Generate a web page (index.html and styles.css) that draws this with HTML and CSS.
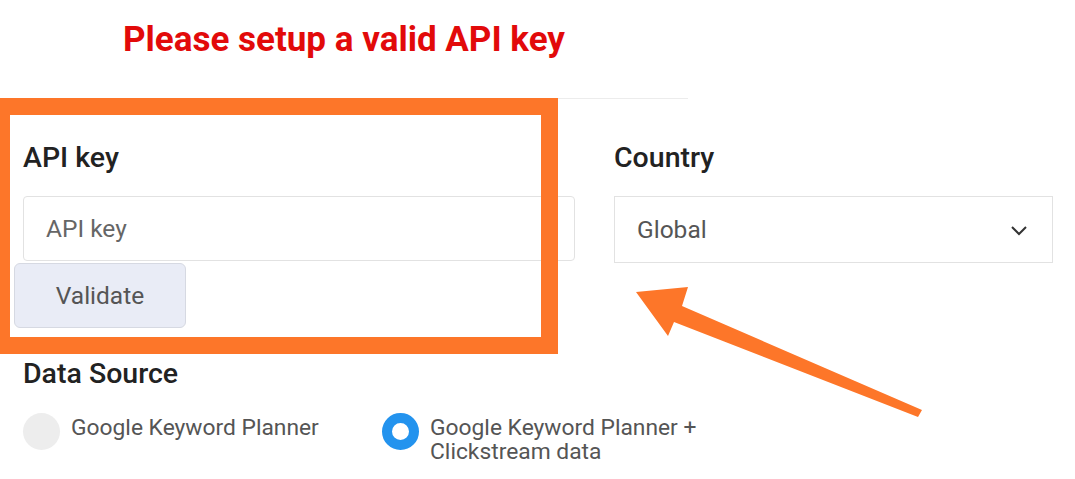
FILE: index.html
```html
<!DOCTYPE html>
<html lang="en">
<head>
  <meta charset="UTF-8" />
  <title>API key setup</title>
  <link rel="stylesheet" href="styles.css">
</head>
<body>
  <div class="page">
    <!-- Aviso -->
    <div class="top">
      <h1 class="warning">Please setup a valid API key</h1>
    </div>

    <!-- Campos -->
    <div class="fields">
      <div class="field field-key">
        <label class="label">API key</label>
        <input class="input" type="text" placeholder="API key" />
        <button class="btn-validate">Validate</button>
      </div>
      <div class="field field-country">
        <label class="label">Country</label>
        <div class="select">
          <span>Global</span>
          <svg class="chevron" width="18" height="12" viewBox="0 0 18 12">
            <polyline points="2,3 9,10 16,3" fill="none" stroke="#333" stroke-width="2" />
          </svg>
        </div>
      </div>
    </div>

    <div class="source">
      <div class="label">Data Source</div>
      <div class="options">
        <div class="option">
          <span class="radio"></span>
          <span class="option-text">Google Keyword Planner</span>
        </div>
        <div class="option">
          <span class="radio radio-on"></span>
          <span class="option-text">Google Keyword Planner +<br>Clickstream data</span>
        </div>
      </div>
    </div>

    <!-- Anotaciones -->
    <div class="highlight"></div>
    <svg class="arrow" width="1075" height="479" viewBox="0 0 1075 479">
      <polygon points="636,292 688,287 682,306 922,410 918,417 674,322 668,336" fill="#fd7629" />
    </svg>
  </div>
</body>
</html>
```

FILE: styles.css
```css
body {
  margin: 0;
  font-family: Roboto, "Liberation Sans", sans-serif;
  background: white;
  color: #222;
}

.page {
  position: relative;
  width: 1075px;
  height: 479px;
  overflow: hidden;
}

.top {
  width: 688px;
  height: 98px;
  border-bottom: 1px solid #ececec;
  text-align: center;
}

.warning {
  margin: 0;
  padding-top: 20px;
  font-size: 35px;
  line-height: 40px;
  font-weight: 700;
  color: #e20a0a;
}

.fields {
  display: flex;
  gap: 39px;
  padding: 44px 22px 0 23px;
}

.field-key {
  width: 552px;
}

.field-country {
  flex: 1;
}

.label {
  display: block;
  font-size: 28.5px;
  line-height: 30px;
  font-weight: 500;
  color: #222;
  margin-bottom: 23px;
}

.input {
  display: block;
  box-sizing: border-box;
  width: 100%;
  height: 65px;
  padding: 0 22px;
  border: 1px solid #e2e2e2;
  border-radius: 4px;
  font-family: inherit;
  font-size: 24.5px;
  color: #333;
  outline: none;
}

.input::placeholder {
  color: #666;
}

.btn-validate {
  display: block;
  box-sizing: border-box;
  width: 172px;
  height: 65px;
  margin: 2px 0 0 -9px;
  background-color: #e9ecf6;
  border: 1px solid #d6d9e2;
  border-radius: 6px;
  font-family: inherit;
  font-size: 24.5px;
  color: #555;
}

.select {
  box-sizing: border-box;
  height: 67px;
  padding: 0 24px 0 22px;
  border: 1px solid #e2e2e2;
  display: flex;
  align-items: center;
  justify-content: space-between;
  font-size: 24.5px;
  color: #555;
}

.source {
  padding: 31px 0 0 23px;
}

.source .label {
  margin-bottom: 24px;
}

.options {
  display: grid;
  grid-template-columns: 359px auto;
}

.option {
  display: flex;
  gap: 11px;
}

.radio {
  flex: none;
  box-sizing: border-box;
  width: 37px;
  height: 37px;
  border-radius: 50%;
  background-color: #ededed;
}

.radio-on {
  background-color: white;
  border: 10px solid #2393ee;
}

.option-text {
  padding-top: 3px;
  font-size: 22.8px;
  line-height: 24px;
  color: #555;
}

.highlight {
  position: absolute;
  left: 0;
  top: 98px;
  width: 531px;
  height: 222px;
  border: 17px solid #fd7629;
  border-left-width: 10px;
}

.arrow {
  position: absolute;
  left: 0;
  top: 0;
}
```
